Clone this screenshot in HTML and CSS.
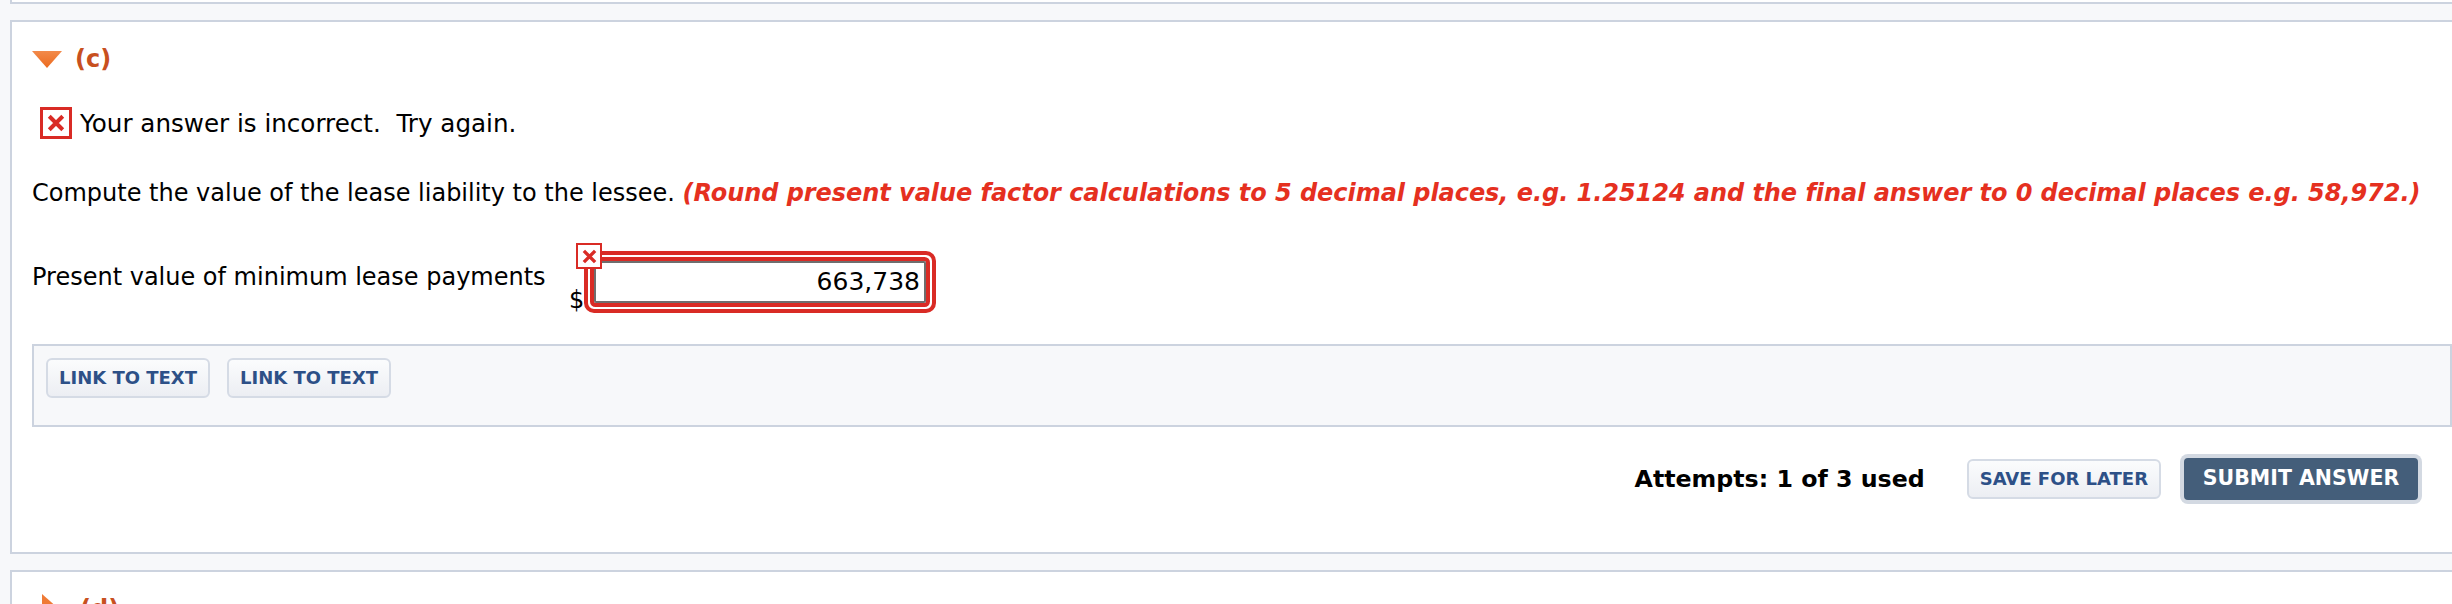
FILE: index.html
```html
<!DOCTYPE html>
<html lang="en">

<head>
    <meta charset="UTF-8">
    <title>Question part (c)</title>
    <link rel="stylesheet" href="styles.css">
</head>

<body>
    <div class="part part-prev"></div>

    <!-- Part c -->
    <div class="part part-c">
        <div class="part-title">
            <svg class="arrow" viewBox="0 0 30 17"><defs><linearGradient id="arrow-down" x1="0" y1="0" x2="0" y2="1"><stop offset="0" stop-color="#f28a4a"/><stop offset="1" stop-color="#ec6a1e"/></linearGradient></defs><path d="M0 0H30L15 17Z" fill="url(#arrow-down)"/></svg>
            <span>(c)</span>
        </div>

        <div class="feedback">
            <span class="x-box"><svg viewBox="0 0 16 16"><path d="M2 2L14 14M14 2L2 14" stroke="#d92b25" stroke-width="3.6"/></svg></span>
            <span>Your answer is incorrect.&nbsp; Try again.</span>
        </div>

        <p class="question">Compute the value of the lease liability to the lessee. <em>(Round present value factor calculations to 5 decimal places, e.g. 1.25124 and the final answer to 0 decimal places e.g. 58,972.)</em></p>

        <div class="answer-row">
            <span class="answer-label">Present value of minimum lease payments</span>
            <span class="dollar">$</span>
            <div class="answer-field">
                <span class="x-box x-small"><svg viewBox="0 0 16 16"><path d="M2 2L14 14M14 2L2 14" stroke="#d92b25" stroke-width="3.6"/></svg></span>
                <div class="answer-input">663,738</div>
            </div>
        </div>

        <div class="links">
            <a class="btn">LINK TO TEXT</a>
            <a class="btn">LINK TO TEXT</a>
        </div>

        <div class="actions">
            <span class="attempts">Attempts: 1 of 3 used</span>
            <a class="btn btn-save">SAVE FOR LATER</a>
            <a class="btn-submit">SUBMIT ANSWER</a>
        </div>
    </div>

    <!-- Part d -->
    <div class="part part-d">
        <div class="part-title">
            <svg class="arrow-right" viewBox="0 0 17 30"><path d="M0 0V30L17 15Z" fill="#ef7a35"/></svg>
            <span>(d)</span>
        </div>
    </div>
</body>

</html>
```

FILE: styles.css
```css
/* General */
html, body {
    height: 604px;
    overflow: hidden;
}

body {
    margin: 0;
    padding: 0 0 0 10px;
    background-color: #f7f8fa;
    font-family: "DejaVu Sans", Verdana, sans-serif;
    font-size: 24px;
    color: #000;
}

.part {
    background-color: #fff;
    border: 2px solid #ccd3df;
    border-right: none;
    padding: 0 0 0 20px;
}

.part-prev {
    height: 2px;
    border-top: none;
    padding: 0;
    margin-bottom: 16px;
}

.part-c {
    height: 534px;
    box-sizing: border-box;
    margin-bottom: 16px;
}

.part-d {
    border-bottom: none;
    height: 40px;
}

/* Heading */
.part-title {
    display: flex;
    align-items: center;
    gap: 13px;
    margin-top: 22px;
    height: 30px;
    color: #c8501f;
    font-weight: bold;
}

.arrow {
    width: 30px;
    height: 17px;
}

.arrow-right {
    width: 17px;
    height: 30px;
    margin-left: 10px;
    margin-right: 8px;
}

/* Feedback line */
.feedback {
    display: flex;
    align-items: center;
    gap: 8px;
    margin: 33px 0 0 8px;
    height: 32px;
    font-size: 24.6px;
}

.x-box {
    box-sizing: border-box;
    display: flex;
    align-items: center;
    justify-content: center;
    width: 32px;
    height: 32px;
    border: 3px solid #d92b25;
    background-color: #fff;
}

.x-box svg {
    width: 18px;
    height: 18px;
}

.question {
    margin: 39px 0 0;
    line-height: 30px;
}

.question em {
    color: #e5301f;
    font-weight: bold;
    letter-spacing: -0.05px;
}

/* Answer */
.answer-row {
    display: flex;
    align-items: flex-start;
    margin-top: 32px;
}

.answer-label {
    width: 538px;
    margin-top: 22px;
    line-height: 30px;
}

.dollar {
    margin-top: 45px;
    margin-left: -1px;
    margin-right: 1px;
    margin-bottom: 1px;
    line-height: 30px;
    width: 14px;
}

.answer-field {
    position: relative;
    box-sizing: border-box;
    width: 352px;
    height: 62px;
    margin-top: 11px;
    border: 4px solid #d92b25;
    border-radius: 10px;
    padding: 6px;
}

.x-small {
    position: absolute;
    left: -12px;
    top: -12px;
    z-index: 1;
    width: 26px;
    height: 26px;
    border-width: 2.5px;
}

.x-small svg {
    width: 15px;
    height: 15px;
}

.answer-input {
    box-sizing: border-box;
    height: 100%;
    border: 2px solid #6e6e6e;
    border-radius: 2px;
    box-shadow: 0 0 0 4px #d92b25;
    text-align: right;
    padding-right: 4px;
    font-size: 25px;
    line-height: 38px;
}

/* Links */
.links {
    box-sizing: border-box;
    display: flex;
    gap: 17px;
    height: 83px;
    margin-top: 28px;
    padding: 12px 0 0 12px;
    background-color: #f7f8fa;
    border: 2px solid #ccd3df;
}

.btn {
    box-sizing: border-box;
    display: block;
    height: 40px;
    padding: 0 11px;
    line-height: 36px;
    font-size: 18px;
    font-weight: bold;
    color: #2d5087;
    background: linear-gradient(to bottom, #fbfcfd, #eceef3);
    border: 2px solid #d5dbe5;
    border-radius: 6px;
}

/* Bottom row */
.actions {
    display: flex;
    align-items: center;
    justify-content: flex-end;
    margin-top: 31px;
    padding-right: 34px;
}

.attempts {
    font-size: 23.7px;
    font-weight: bold;
    margin-right: 42px;
}

.btn-submit {
    box-sizing: border-box;
    display: block;
    height: 42px;
    width: 234px;
    margin-left: 23px;
    text-align: center;
    line-height: 40px;
    font-size: 20.5px;
    font-weight: bold;
    color: #fff;
    background-color: #445e7a;
    border-radius: 4px;
    box-shadow: 0 0 0 4px #d3d9e2;
}
```
